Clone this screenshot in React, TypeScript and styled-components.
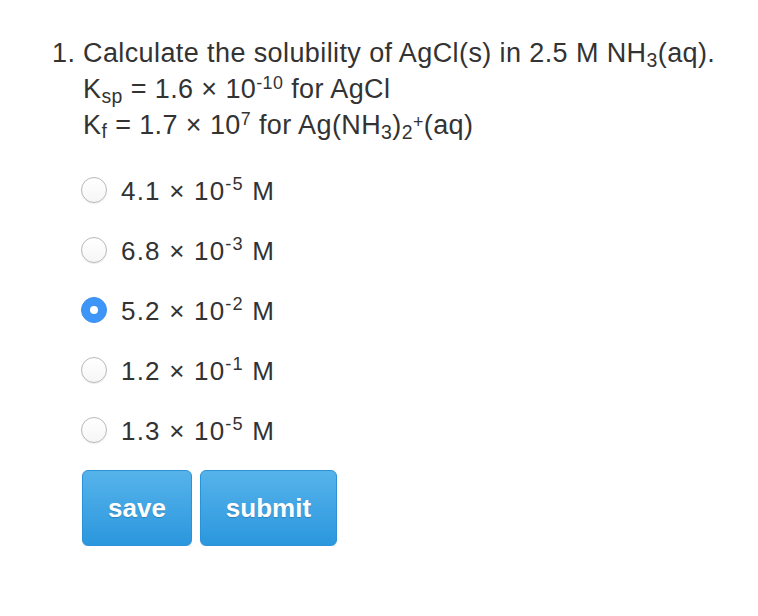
import React from "react";
import styled, { createGlobalStyle } from "styled-components";

const GlobalStyle = createGlobalStyle`
  html, body {
    margin: 0;
    padding: 0;
    background: #fff;
  }
  body {
    font-family: "Liberation Sans", Arial, sans-serif;
    color: #333;
  }
`;

const Page = styled.div`
  padding: 35px 0 0 52px;
`;

const Question = styled.div`
  display: flex;
  font-size: 27px;
  letter-spacing: 0.4px;
  line-height: 36px;
`;

const Number = styled.div`
  width: 31px;
  flex: none;
`;

const Body = styled.div`
  display: flex;
  flex-direction: column;
`;

const Line = styled.div`
  white-space: nowrap;
`;

const Sub = styled.sub<{ $drop?: number }>`
  font-size: 0.72em;
  line-height: 0;
  vertical-align: ${(p) => -(p.$drop ?? 5)}px;
`;

const Sup = styled.sup<{ $rise?: number; $size?: number }>`
  font-size: ${(p) => p.$size ?? 0.66}em;
  line-height: 0;
  vertical-align: ${(p) => p.$rise ?? 9}px;
`;

const Options = styled.div`
  display: flex;
  flex-direction: column;
  margin: 18px 0 0 -2px;
`;

const Option = styled.label`
  display: flex;
  align-items: center;
  height: 60px;
  gap: 14px;
  font-size: 26px;
  letter-spacing: 1.2px;
  cursor: pointer;
`;

const Radio = styled.span<{ $checked?: boolean }>`
  width: 26px;
  height: 26px;
  box-sizing: border-box;
  border-radius: 50%;
  flex: none;
  display: flex;
  align-items: center;
  justify-content: center;
  margin-top: -2px;
  background: ${(p) =>
    p.$checked ? "#3d95f7" : "linear-gradient(#fff, #f6f6f6)"};
  border: 1px solid ${(p) => (p.$checked ? "#3a8ff0" : "#b9b9b9")};
  box-shadow: ${(p) => (p.$checked ? "none" : "0 1px 1px rgba(0,0,0,0.08)")};
  &::after {
    content: "";
    display: ${(p) => (p.$checked ? "block" : "none")};
    width: 8px;
    height: 8px;
    border-radius: 50%;
    background: #fff;
  }
`;

const Buttons = styled.div`
  display: flex;
  gap: 8px;
  margin: 9px 0 0 -1px;
  letter-spacing: 0;
`;

const Button = styled.button`
  height: 76px;
  padding: 0 25px;
  border: 1px solid #2b91d8;
  border-radius: 6px;
  background: linear-gradient(#56b3ea, #2b97de);
  color: #fff;
  font-family: "Liberation Sans", Arial, sans-serif;
  font-weight: bold;
  font-size: 26px;
  text-shadow: 0 1px 1px rgba(0, 0, 0, 0.2);
  box-shadow: 0 1px 1px rgba(0, 0, 0, 0.1);
  cursor: pointer;
`;

const answers = [
  { base: "4.1", exp: "-5" },
  { base: "6.8", exp: "-3" },
  { base: "5.2", exp: "-2", checked: true },
  { base: "1.2", exp: "-1" },
  { base: "1.3", exp: "-5" },
];

export default function App() {
  return (
    <Page>
      <GlobalStyle />
      <Question>
        <Number>1.</Number>
        <Body>
          <Line>
            Calculate the solubility of AgCl(s) in 2.5 M NH<Sub>3</Sub>(aq).
          </Line>
          <Line>
            K<Sub>sp</Sub> = 1.6 × 10<Sup>-10</Sup> for AgCl
          </Line>
          <Line>
            K<Sub $drop={4}>f</Sub> = 1.7 × 10<Sup>7</Sup> for Ag(NH<Sub>3</Sub>)
            <Sub>2</Sub>
            <Sup $rise={6}>+</Sup>(aq)
          </Line>
          <Options>
            {answers.map((a, i) => (
              <Option key={i}>
                <Radio $checked={a.checked} />
                <span>
                  {a.base} × 10<Sup $rise={10} $size={0.7}>{a.exp}</Sup> M
                </span>
              </Option>
            ))}
          </Options>
          <Buttons>
            <Button>save</Button>
            <Button>submit</Button>
          </Buttons>
        </Body>
      </Question>
    </Page>
  );
}
